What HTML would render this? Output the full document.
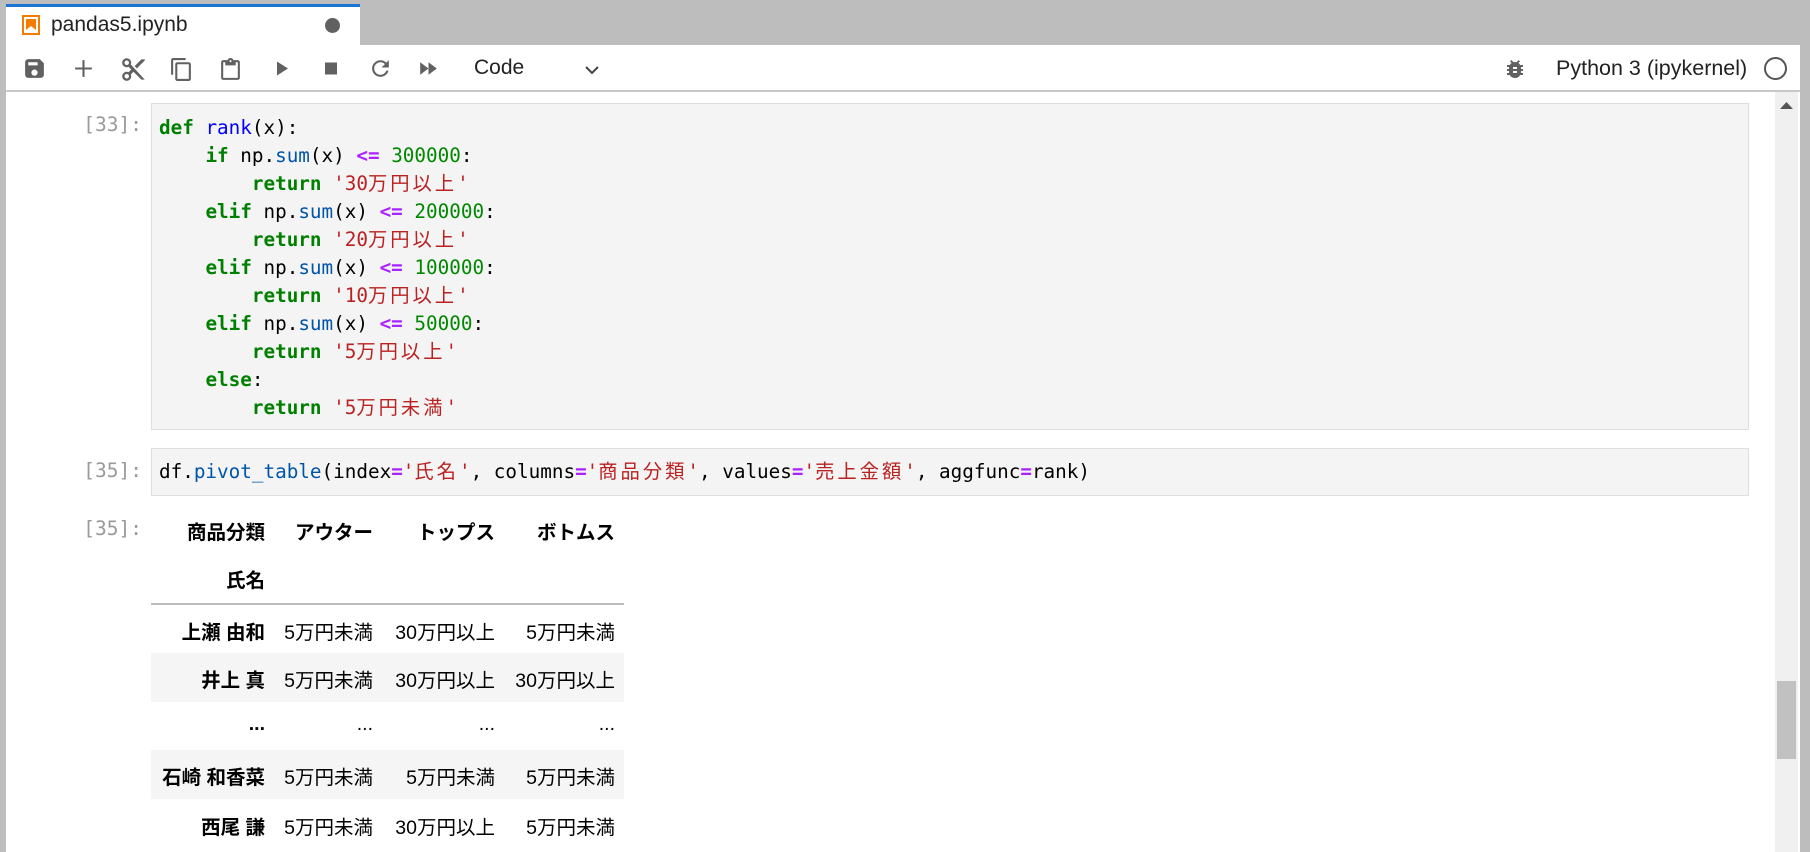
<!DOCTYPE html>
<html><head><meta charset="utf-8"><style>
*{margin:0;padding:0;box-sizing:border-box}
html,body{width:1810px;height:852px;overflow:hidden}
body{background:#bdbdbd;font-family:"Liberation Sans","Noto Sans CJK JP",sans-serif;position:relative}
.tab{position:absolute;left:6px;top:4px;width:354px;height:41px;background:#fff;border-top:3px solid #1976d2}
.tab .lbl{position:absolute;left:45px;top:6px;font-size:21px;color:#222}
.tab .dot{position:absolute;left:319px;top:11px;width:15px;height:15px;border-radius:50%;background:#616161}
.main{position:absolute;left:6px;top:45px;width:1794px;height:807px;background:#fff;overflow:hidden}
.tb{position:absolute;left:0;top:0;width:1794px;height:47px;border-bottom:2px solid #c8c8c8}
.ic{position:absolute;top:11px}
.code{position:absolute;left:145px;background:#f4f4f4;border:1px solid #dedede;width:1598px;font-family:"DejaVu Sans Mono","Liberation Mono","Noto Sans CJK JP",monospace;font-size:19.3px;line-height:28px;color:#000;white-space:pre;padding:0 0 0 7px}
.j{letter-spacing:3px}
.pr{position:absolute;width:136px;text-align:right;font-family:"DejaVu Sans Mono","Liberation Mono",monospace;font-size:19.5px;color:#999}
.k{color:#008000;font-weight:bold}.f{color:#0000ff}.p{color:#0055aa}.o{color:#aa22ff;font-weight:bold}.n{color:#008800}.s{color:#ba2121}
.t{position:absolute;left:145px;width:473px;font-family:"Liberation Sans","Noto Sans CJK JP",sans-serif;font-size:19.5px;color:#000}
.r{position:absolute;left:0;width:473px;height:49px}
.r span{position:absolute;top:11px;text-align:right;white-space:nowrap}
.b{font-weight:bold}
.sb{position:absolute;left:1769px;top:47px;width:23px;height:760px;background:#f0f0f0}
</style></head><body>
<div class="tab">
<svg style="position:absolute;left:16px;top:8px" width="18" height="20" viewBox="0 0 18 20"><rect x="1" y="1" width="16" height="18" fill="none" stroke="#f57c00" stroke-width="2"/><path d="M4 4h10v11l-5-4-5 4z" fill="#f57c00"/></svg>
<div class="lbl">pandas5.ipynb</div><div class="dot"></div></div>
<div class="main">
<div class="tb">
<svg class="ic" style="left:16px" width="25" height="25" viewBox="0 0 24 24"><path fill="#616161" d="M17 3H6a3 3 0 0 0-3 3v12a3 3 0 0 0 3 3h12a3 3 0 0 0 3-3V7zm-5 16a3 3 0 1 1 0-6 3 3 0 0 1 0 6zm3-10H6V6h9z"/></svg>
<svg class="ic" style="left:65px" width="25" height="25" viewBox="0 0 24 24"><path fill="#616161" d="M11 4h2v7h7v2h-7v7h-2v-7H4v-2h7z"/></svg>
<svg class="ic" style="left:114px" width="27" height="27" viewBox="0 0 24 24"><path fill="#616161" d="M9.6 7.6A4 4 0 1 0 6 10c.6 0 1.1-.1 1.6-.4L10 12l-2.4 2.4A4 4 0 1 0 9.6 16.4L12 14l7 7h3L9.6 7.6zM6 8a2 2 0 1 1 0-4 2 2 0 0 1 0 4zm0 12a2 2 0 1 1 0-4 2 2 0 0 1 0 4zM19 3l-6 6 2 2 7-7V3z"/></svg>
<svg class="ic" style="left:163px" width="25" height="27" viewBox="0 0 24 24"><path fill="#616161" d="M16 1H4a2 2 0 0 0-2 2v14h2V3h12zm3 4H8a2 2 0 0 0-2 2v14a2 2 0 0 0 2 2h11a2 2 0 0 0 2-2V7a2 2 0 0 0-2-2zm0 16H8V7h11z"/></svg>
<svg class="ic" style="left:212px" width="25" height="27" viewBox="0 0 24 24"><path fill="#616161" d="M19 3h-4.2A3 3 0 0 0 12 1a3 3 0 0 0-2.8 2H5a2 2 0 0 0-2 2v15a2 2 0 0 0 2 2h14a2 2 0 0 0 2-2V5a2 2 0 0 0-2-2zm-7 0a1 1 0 1 1 0 2 1 1 0 0 1 0-2zm7 17H5V5h2v3h10V5h2z"/></svg>
<svg class="ic" style="left:264px" width="24" height="25" viewBox="0 0 24 24"><path fill="#616161" d="M7 5v14l11-7z"/></svg>
<svg class="ic" style="left:313px" width="24" height="25" viewBox="0 0 24 24"><path fill="#616161" d="M6 6h12v12H6z"/></svg>
<svg class="ic" style="left:362px" width="25" height="25" viewBox="0 0 24 24"><path fill="#616161" d="M17.6 6.4A8 8 0 1 0 19.7 14h-2.1A6 6 0 1 1 12 6c1.7 0 3.1.7 4.2 1.8L13 11h7V4z"/></svg>
<svg class="ic" style="left:410px" width="25" height="25" viewBox="0 0 24 24"><path fill="#616161" d="M4 6v12l8-6zm8 0v12l8-6z"/></svg>
<div style="position:absolute;left:468px;top:11px;font-size:21px;color:#222">Code</div>
<svg style="position:absolute;left:578px;top:19px" width="16" height="12" viewBox="0 0 16 12"><path d="M2 3l6 6 6-6" fill="none" stroke="#444" stroke-width="2"/></svg>
<svg class="ic" style="left:1497px;top:12px" width="24" height="24" viewBox="0 0 24 24"><path fill="#616161" d="M20 8h-2.8a6 6 0 0 0-1.8-2l1.6-1.6L15.6 3l-2.2 2.2a6 6 0 0 0-2.8 0L8.4 3 7 4.4 8.6 6a6 6 0 0 0-1.8 2H4v2h2.1c-.1.3-.1.7-.1 1v1H4v2h2v1c0 .3 0 .7.1 1H4v2h2.8a6 6 0 0 0 10.4 0H20v-2h-2.1c.1-.3.1-.7.1-1v-1h2v-2h-2v-1c0-.3 0-.7-.1-1H20zm-6 8h-4v-2h4zm0-4h-4v-2h4z"/></svg>
<div style="position:absolute;left:1550px;top:11px;font-size:21.5px;color:#222">Python 3 (ipykernel)</div>
<div style="position:absolute;left:1758px;top:12px;width:23px;height:23px;border-radius:50%;border:2px solid #555"></div>
</div>
<div class="sb"><svg style="position:absolute;left:5px;top:10px" width="13" height="8"><path d="M0 7L6.5 0 13 7z" fill="#555"/></svg><div style="position:absolute;left:2px;top:589px;width:19px;height:78px;background:#c1c1c1"></div></div>

<div class="pr" style="left:0;top:68px">[33]:</div>
<div class="code" style="top:58px;height:327px;padding-top:10px"><span class="k">def</span> <span class="f">rank</span>(x):
    <span class="k">if</span> np.<span class="p">sum</span>(x) <span class="o">&lt;=</span> <span class="n">300000</span>:
        <span class="k">return</span> <span class="s">'30<span class="j">万円以上</span>'</span>
    <span class="k">elif</span> np.<span class="p">sum</span>(x) <span class="o">&lt;=</span> <span class="n">200000</span>:
        <span class="k">return</span> <span class="s">'20<span class="j">万円以上</span>'</span>
    <span class="k">elif</span> np.<span class="p">sum</span>(x) <span class="o">&lt;=</span> <span class="n">100000</span>:
        <span class="k">return</span> <span class="s">'10<span class="j">万円以上</span>'</span>
    <span class="k">elif</span> np.<span class="p">sum</span>(x) <span class="o">&lt;=</span> <span class="n">50000</span>:
        <span class="k">return</span> <span class="s">'5<span class="j">万円以上</span>'</span>
    <span class="k">else</span>:
        <span class="k">return</span> <span class="s">'5<span class="j">万円未満</span>'</span></div>

<div class="pr" style="left:0;top:414px">[35]:</div>
<div class="code" style="top:403px;height:48px;padding-top:9px">df.<span class="p">pivot_table</span>(index<span class="o">=</span><span class="s">'<span class="j">氏名</span>'</span>, columns<span class="o">=</span><span class="s">'<span class="j">商品分類</span>'</span>, values<span class="o">=</span><span class="s">'<span class="j">売上金額</span>'</span>, aggfunc<span class="o">=</span>rank)</div>

<div class="pr" style="left:0;top:472px">[35]:</div>
<div class="t" style="top:460px;height:340px">
<div class="r b" style="top:0"><span style="right:359px">商品分類</span><span style="right:251px">アウター</span><span style="right:129px">トップス</span><span style="right:9px">ボトムス</span></div>
<div class="r b" style="top:48px"><span style="right:359px">氏名</span></div>
<div style="position:absolute;left:0;top:98px;width:473px;height:2px;background:#bdbdbd"></div>
<div class="r" style="top:100px"><span class="b" style="right:359px">上瀬 由和</span><span style="right:251px">5万円未満</span><span style="right:129px">30万円以上</span><span style="right:9px">5万円未満</span></div>
<div class="r" style="top:148px;background:#f5f5f5"><span class="b" style="right:359px">井上 真</span><span style="right:251px">5万円未満</span><span style="right:129px">30万円以上</span><span style="right:9px">30万円以上</span></div>
<div class="r" style="top:197px"><span class="b" style="right:359px">...</span><span style="right:251px">...</span><span style="right:129px">...</span><span style="right:9px">...</span></div>
<div class="r" style="top:245px;background:#f5f5f5"><span class="b" style="right:359px">石崎 和香菜</span><span style="right:251px">5万円未満</span><span style="right:129px">5万円未満</span><span style="right:9px">5万円未満</span></div>
<div class="r" style="top:295px"><span class="b" style="right:359px">西尾 謙</span><span style="right:251px">5万円未満</span><span style="right:129px">30万円以上</span><span style="right:9px">5万円未満</span></div>
</div>
</div>
</body></html>
